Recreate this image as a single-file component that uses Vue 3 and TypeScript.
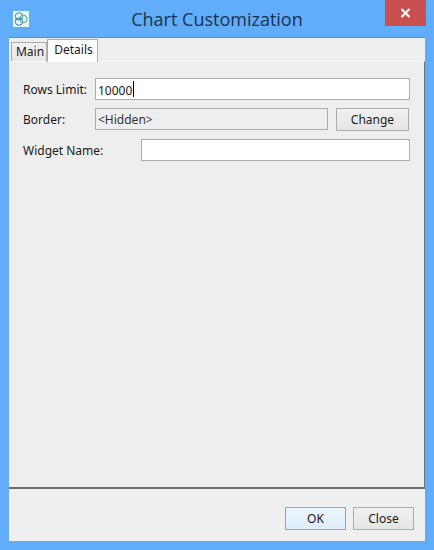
<script setup lang="ts">
import { ref } from 'vue'
const rowsLimit = ref('10000')
const widgetName = ref('')
</script>

<template>
  <div class="window">
    <header class="titlebar">
      <svg class="app-icon" viewBox="0 0 16 16" aria-hidden="true">
        <rect width="16" height="16" fill="#e8f6f3" />
        <circle cx="6" cy="5.4" r="3.7" fill="none" stroke="#3f8aa0" stroke-width="1" />
        <circle cx="10.4" cy="8" r="3.7" fill="none" stroke="#4aa588" stroke-width="1" />
        <circle cx="6" cy="10.6" r="3.7" fill="none" stroke="#2f78a6" stroke-width="1" />
      </svg>
      <h1 class="title">Chart Customization</h1>
      <button class="close-x" aria-label="Close window">
        <svg viewBox="0 0 10 10" width="11" height="10" aria-hidden="true">
          <path d="M1 1 9 9M9 1 1 9" stroke="#fff" stroke-width="2.1" fill="none" />
        </svg>
      </button>
    </header>

    <div class="client">
      <div class="tabs">
        <div class="tab">Main</div>
        <div class="tab active">Details</div>
      </div>

      <section class="panel">
        <div class="row">
          <label class="label">Rows Limit:</label>
          <div class="input-wrap">
            <input v-model="rowsLimit" class="field" />
            <span class="caret"></span>
          </div>
        </div>
        <div class="row row-border">
          <label class="label">Border:</label>
          <div class="readonly">&lt;Hidden&gt;</div>
          <button class="btn change">Change</button>
        </div>
        <div class="row row-widget">
          <label class="label label-wide">Widget Name:</label>
          <input v-model="widgetName" class="field" />
        </div>
      </section>

      <footer class="actions">
        <button class="btn action default">OK</button>
        <button class="btn action">Close</button>
      </footer>
    </div>
  </div>
</template>

<style>
html, body { margin: 0; padding: 0; background: #62adf9; }
</style>

<style scoped>
.window {
  box-sizing: border-box;
  width: 434px;
  height: 550px;
  background: #62adf9;
  display: flex;
  flex-direction: column;
  padding: 0 9px 9px;
  font-family: "Noto Sans", "Open Sans", sans-serif;
  font-size: 12px;
  color: #1a1a1a;
  overflow: hidden;
}
.titlebar {
  flex: 0 0 37px;
  display: flex;
  align-items: flex-start;
  justify-content: center;
  position: relative;
}
.app-icon {
  position: absolute;
  left: 4px;
  top: 11px;
  width: 16px;
  height: 16px;
}
.title {
  margin: 7px 0 0;
  font-family: "Open Sans", sans-serif;
  font-weight: 400;
  font-size: 18px;
  line-height: 25px;
  color: #17324e;
}
.close-x {
  position: absolute;
  right: -1px;
  top: 0;
  width: 41px;
  height: 26px;
  padding: 0;
  border: 0;
  background: #c9504f;
  display: flex;
  align-items: center;
  justify-content: center;
}
.client {
  flex: 1;
  display: flex;
  flex-direction: column;
  background: #efefef;
  border-top: 1px solid #4f94d8;
  min-height: 0;
}
.tabs {
  flex: 0 0 23px;
  display: flex;
  align-items: flex-end;
  padding-left: 2px;
  position: relative;
  z-index: 1;
}
.tab {
  box-sizing: border-box;
  height: 19px;
  width: 36px;
  padding-left: 2px;
  border: 1px solid #ababab;
  border-bottom: 0;
  background: linear-gradient(#f2f2f2, #e6e6e6);
  text-align: center;
  line-height: 18px;
}
.tab.active {
  height: 23px;
  width: 51px;
  background: #fff;
  line-height: 20px;
  margin-bottom: -1px;
}
.panel {
  flex: 0 0 428px;
  box-sizing: border-box;
  background: #eeeeee;
  border-top: 1px solid #fbfbfb;
  border-right: 1px solid #6d7278;
  border-bottom: 2px solid #6d6d6d;
  padding: 16px 14px 0 14px;
}
.row {
  display: flex;
  align-items: center;
  height: 22px;
}
.row-border { margin-top: 8px; }
.row-widget { margin-top: 9px; }
.label {
  flex: 0 0 72px;
  padding-top: 2px;
  line-height: 22px;
  white-space: nowrap;
}
.label-wide { flex-basis: 118px; }
.input-wrap {
  flex: 1;
  position: relative;
  height: 100%;
  min-width: 0;
  display: flex;
}
.field {
  flex: 1;
  min-width: 0;
  box-sizing: border-box;
  height: 22px;
  border: 1px solid #ababab;
  background: #fff;
  padding: 2px 2px 0;
  font: inherit;
  color: inherit;
  outline: none;
}
.caret {
  position: absolute;
  left: 38px;
  top: 3px;
  width: 1px;
  height: 16px;
  background: #000;
}
.readonly {
  box-sizing: border-box;
  width: 233px;
  height: 22px;
  border: 1px solid #ababab;
  background: #eeeeee;
  padding: 1px 2px 0;
  line-height: 20px;
  color: #333;
}
.btn {
  box-sizing: border-box;
  border: 1px solid #acacac;
  background: linear-gradient(#f0f0f0, #e5e5e5);
  font: inherit;
  color: #1a1a1a;
  padding: 0;
}
.change {
  width: 73px;
  height: 23px;
  margin-left: 8px;
}
.actions {
  flex: 1;
  display: flex;
  justify-content: flex-end;
  gap: 7px;
  padding: 18px 11px 0 0;
  align-items: flex-start;
}
.action {
  width: 61px;
  height: 23px;
}
.default {
  border-color: #6fb0e0;
  background: linear-gradient(#ecf5fc, #dfeefa);
}
</style>
